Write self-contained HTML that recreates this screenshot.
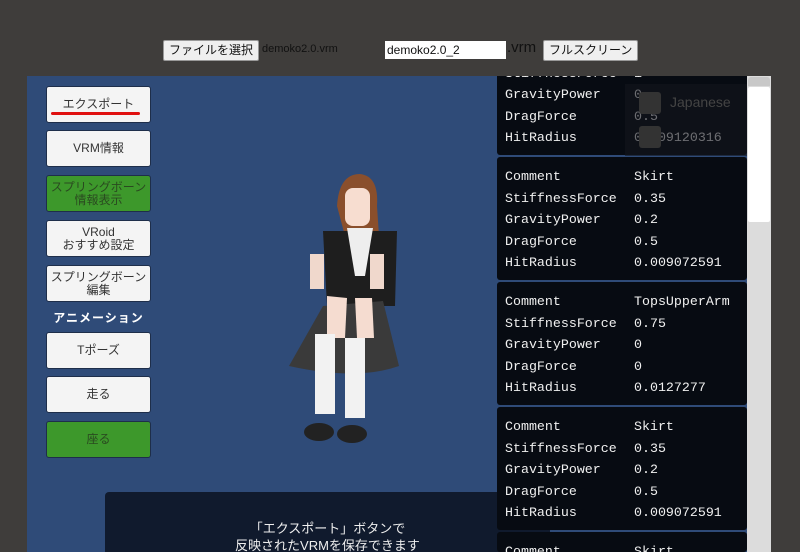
<!DOCTYPE html>
<html><head><meta charset="utf-8"><style>
*{margin:0;padding:0;box-sizing:border-box}
html,body{width:800px;height:552px;overflow:hidden}
body{background:#3f3d3b;position:relative;font-family:"Liberation Sans","Noto Sans CJK JP",sans-serif}
.fb{position:absolute;top:40px;height:21px;background:#efefef;border:1px solid #999;font-size:12px;line-height:19px;padding:0 5px;color:#111;border-radius:2px;white-space:nowrap}
#canvas{position:absolute;left:27px;top:76px;width:744px;height:476px;background:#2f4b78;overflow:hidden}
.btn{position:absolute;left:19px;width:105px;height:37px;background:#f4f4f4;border:1px solid #1e2e4a;border-radius:3px;font-size:12px;color:#333;text-align:center;display:flex;align-items:center;justify-content:center;line-height:13px;white-space:nowrap}
.g{background:#3d982b;color:#2a4a20}
.blk{position:absolute;left:470px;width:250px;height:123px;background:#070b12;border-radius:3px;font-family:"Liberation Mono","Noto Sans CJK JP",monospace;font-size:13.3px;color:#f0f0f0;padding-top:9px}
.r{height:21.5px;line-height:21px;padding-left:8px;white-space:pre}
.r span{position:absolute;left:137px}
</style></head><body>
<div class="fb" style="left:163px">ファイルを選択</div>
<div style="position:absolute;left:262px;top:43px;font-size:11px;color:#111">demoko2.0.vrm</div>
<div style="position:absolute;left:385px;top:41px;width:121px;height:18px;background:#fff;font-size:12px;line-height:18px;padding-left:2px;color:#111">demoko2.0_2</div>
<div style="position:absolute;left:507px;top:39px;font-size:15px;color:#111">.vrm</div>
<div class="fb" style="left:543px">フルスクリーン</div>
<div id="canvas">
<div class="btn" style="top:10px">エクスポート<div style="position:absolute;left:4px;right:10px;top:25px;height:3px;background:#e01010;border-radius:2px"></div></div>
<div class="btn" style="top:54px">VRM情報</div>
<div class="btn g" style="top:99px">スプリングボーン<br>情報表示</div>
<div class="btn" style="top:144px">VRoid<br>おすすめ設定</div>
<div class="btn" style="top:189px">スプリングボーン<br>編集</div>
<div style="position:absolute;left:19px;width:105px;top:233px;text-align:center;color:#fff;font-size:12px;font-weight:bold;letter-spacing:1px">アニメーション</div>
<div class="btn" style="top:256px">Tポーズ</div>
<div class="btn" style="top:300px">走る</div>
<div class="btn g" style="top:345px">座る</div>
<svg style="position:absolute;left:0;top:0" width="744" height="476">
<path d="M310 130 Q312 98 333 98 Q352 100 350 130 L352 160 L318 160 Z" fill="#8a4f2c"/>
<rect x="318" y="112" width="25" height="38" rx="8" fill="#f7ddd0"/>
<path d="M296 155 L370 155 L368 230 L300 230 Z" fill="#1e1e1e"/>
<path d="M320 152 L346 152 L338 200 L328 200 Z" fill="#eee"/>
<path d="M296 230 L262 290 Q330 305 372 290 L356 225 Z" fill="#3a3a3a"/>
<rect x="283" y="178" width="14" height="35" fill="#f0d8cc"/><rect x="343" y="178" width="14" height="35" fill="#f0d8cc"/>
<path d="M300 220 L320 222 L318 262 L300 262 Z" fill="#f5dcd0"/><path d="M328 222 L345 222 L347 262 L330 262 Z" fill="#f5dcd0"/>
<rect x="288" y="258" width="20" height="80" fill="#f2f2f2"/><rect x="318" y="262" width="20" height="80" fill="#f2f2f2"/>
<ellipse cx="292" cy="356" rx="15" ry="9" fill="#222"/><ellipse cx="325" cy="358" rx="15" ry="9" fill="#222"/>
</svg>
<div style="position:absolute;left:78px;top:416px;width:445px;height:60px;background:rgba(10,16,28,.82);border-radius:4px 4px 0 0;color:#eee;font-size:13px;text-align:center;padding-top:28px;line-height:17px">「エクスポート」ボタンで<br>反映されたVRMを保存できます</div>
<div class="blk" style="top:-44px"><div class="r">Comment<span>Skirt</span></div><div class="r">StiffnessForce<span>1</span></div><div class="r">GravityPower<span>0</span></div><div class="r">DragForce<span>0.5</span></div><div class="r">HitRadius<span>0.009120316</span></div></div>
<div style="position:absolute;left:598px;top:8px;width:122px;height:72px;background:rgba(20,22,28,.6)"><div style="position:absolute;left:14px;top:8px;width:22px;height:22px;background:#333;border-radius:3px"></div><div style="position:absolute;left:14px;top:42px;width:22px;height:22px;background:#333;border-radius:3px"></div><div style="position:absolute;left:45px;top:10px;color:#444;font-size:14px">Japanese</div></div>
<div class="blk" style="top:81px"><div class="r">Comment<span>Skirt</span></div><div class="r">StiffnessForce<span>0.35</span></div><div class="r">GravityPower<span>0.2</span></div><div class="r">DragForce<span>0.5</span></div><div class="r">HitRadius<span>0.009072591</span></div></div>
<div class="blk" style="top:206px"><div class="r">Comment<span>TopsUpperArm</span></div><div class="r">StiffnessForce<span>0.75</span></div><div class="r">GravityPower<span>0</span></div><div class="r">DragForce<span>0</span></div><div class="r">HitRadius<span>0.0127277</span></div></div>
<div class="blk" style="top:331px"><div class="r">Comment<span>Skirt</span></div><div class="r">StiffnessForce<span>0.35</span></div><div class="r">GravityPower<span>0.2</span></div><div class="r">DragForce<span>0.5</span></div><div class="r">HitRadius<span>0.009072591</span></div></div>
<div class="blk" style="top:456px;height:20px"><div class="r">Comment<span>Skirt</span></div></div>
<div style="position:absolute;left:720px;top:0;width:24px;height:476px;background:#dcdcdc"></div>
<div style="position:absolute;left:721px;top:1px;width:22px;height:9px;background:#c8c8c8;border-radius:3px 3px 0 0"></div>
<div style="position:absolute;left:721px;top:11px;width:22px;height:135px;background:#fff;border-radius:2px"></div>
</div>
</body></html>
